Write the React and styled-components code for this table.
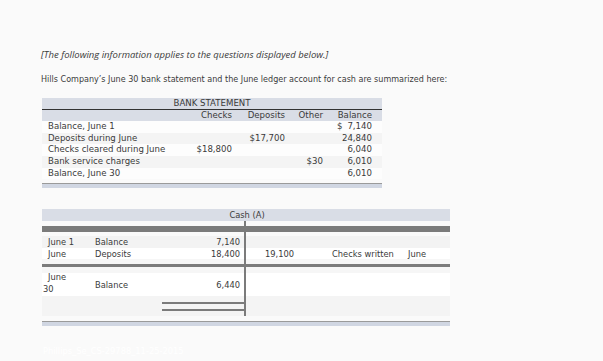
import React from "react";
import styled, { createGlobalStyle } from "styled-components";

const Global = createGlobalStyle`
  html, body { margin: 0; padding: 0; background: #fafafa; }
  body { font-family: "DejaVu Sans", "Open Sans", sans-serif; color: #3a3a3a; }
`;

const Page = styled.div`
  width: 603px;
  height: 361px;
  box-sizing: border-box;
  padding: 49px 0 0 41px;
  display: flex;
  flex-direction: column;
  align-items: flex-start;
  font-size: 8.3px;
`;

const Intro = styled.p`
  margin: 0;
  line-height: 12px;
  font-size: ${(p) => (p.$italic ? "9.5px" : "8.05px")};
  font-family: ${(p) => (p.$italic ? '"Open Sans", "DejaVu Sans", sans-serif' : "inherit")};
  font-style: ${(p) => (p.$italic ? "italic" : "normal")};
  margin-bottom: ${(p) => p.$mb || 0}px;
`;

const BankTable = styled.div`
  width: 340px;
  margin-left: 1px;
  display: flex;
  flex-direction: column;
  font-size: 8.6px;
`;

const TitleBand = styled.div`
  background: #d9dde6;
  height: 11px;
  line-height: 11px;
  text-align: center;
  border-bottom: 1px solid #333;
`;

const BankGrid = styled.div`
  display: grid;
  grid-template-columns: 132px 52px 53px 38px 49px;
  padding: 0 10px 0 6px;
  height: ${(p) => p.$h || 11.7}px;
  line-height: ${(p) => p.$h || 11.7}px;
  background: ${(p) => p.$bg || "transparent"};
`;

const Cell = styled.div`
  text-align: ${(p) => (p.$right ? "right" : "left")};
  white-space: nowrap;
`;

const BalCell = styled.div`
  display: flex;
  justify-content: ${(p) => (p.$dollar ? "space-between" : "flex-end")};
  padding-left: 14px;
  white-space: nowrap;
`;

const FooterBand = styled.div`
  height: 4px;
  margin-top: ${(p) => p.$mt || 0}px;
  border-top: 1px solid #9a9a9a;
  background: #d0d6e2;
`;

const TAccount = styled.div`
  width: 408px;
  margin-left: 1px;
  margin-top: 21px;
  display: flex;
  flex-direction: column;
`;

const TTitle = styled.div`
  background: #d9dde6;
  height: 12px;
  line-height: 12px;
  text-align: center;
  padding-left: 2px;
`;

const TRow = styled.div`
  display: grid;
  grid-template-columns: 204px 1fr;
  height: ${(p) => p.$h}px;
  background: ${(p) => p.$bg || "transparent"};
  border-bottom: ${(p) => (p.$rule ? `${p.$rule}px solid #7b7b7b` : "none")};
`;

const TBar = styled.div`
  height: 6px;
  background: #7b7b7b;
`;

const DebitSide = styled.div`
  display: grid;
  grid-template-columns: ${(p) => (p.$pl === 1 ? "52px" : "47px")} 60px 1fr;
  align-items: center;
  border-right: 2px solid #7b7b7b;
  padding-left: ${(p) => p.$pl ?? 6}px;
  padding-right: 4px;
`;

const CreditSide = styled.div`
  display: grid;
  grid-template-columns: 48px 38px 76px 40px;
  align-items: center;
`;

const Txt = styled.span`
  white-space: nowrap;
  text-align: ${(p) => (p.$right ? "right" : "left")};
`;

const DateWrap = styled.span`
  width: 30px;
  line-height: 11.5px;
  text-indent: 5px;
  white-space: normal;
  align-self: start;
  margin-top: -1px;
`;

const Rules = styled.div`
  grid-column: 1 / -1;
  justify-self: end;
  width: 82px;
  margin-right: -4px;
  height: 5px;
  border-top: 2px solid #7b7b7b;
  border-bottom: 2px solid #7b7b7b;
`;

const Watermark = styled.div`
  margin-top: 20px;
  margin-left: 2px;
  color: #ffffff;
`;

const bankRows = [
  { label: "Balance, June 1", checks: "", deposits: "", other: "", bal: "7,140", dollar: true },
  { label: "Deposits during June", checks: "", deposits: "$17,700", other: "", bal: "24,840" },
  { label: "Checks cleared during June", checks: "$18,800", deposits: "", other: "", bal: "6,040" },
  { label: "Bank service charges", checks: "", deposits: "", other: "$30", bal: "6,010" },
  { label: "Balance, June 30", checks: "", deposits: "", other: "", bal: "6,010" },
];

export default function App() {
  return (
    <>
      <Global />
      <Page>
        <Intro $italic $mb={13}>
          [The following information applies to the questions displayed below.]
        </Intro>
        <Intro $mb={12}>
          Hills Company’s June 30 bank statement and the June ledger account for cash are summarized here:
        </Intro>

        <BankTable>
          <TitleBand>BANK STATEMENT</TitleBand>
          <BankGrid $bg="#d9dde6" $h={11}>
            <Cell />
            <Cell $right>Checks</Cell>
            <Cell $right>Deposits</Cell>
            <Cell $right>Other</Cell>
            <BalCell>Balance</BalCell>
          </BankGrid>
          {bankRows.map((r, i) => (
            <BankGrid key={r.label} $bg={i % 2 ? "#f4f4f4" : "#fdfdfd"}>
              <Cell>{r.label}</Cell>
              <Cell $right>{r.checks}</Cell>
              <Cell $right>{r.deposits}</Cell>
              <Cell $right>{r.other}</Cell>
              <BalCell $dollar={r.dollar}>
                {r.dollar && <span>$</span>}
                <span>{r.bal}</span>
              </BalCell>
            </BankGrid>
          ))}
          <FooterBand $mt={4} />
        </BankTable>

        <TAccount>
          <TTitle>Cash (A)</TTitle>
          <TRow $h={5}>
            <DebitSide />
            <div />
          </TRow>
          <TBar />
          <TRow $h={4}>
            <DebitSide />
            <div />
          </TRow>
          <TRow $h={12} $bg="#f3f3f3">
            <DebitSide>
              <Txt>June 1</Txt>
              <Txt>Balance</Txt>
              <Txt $right>7,140</Txt>
            </DebitSide>
            <CreditSide />
          </TRow>
          <TRow $h={11} $bg="#ffffff">
            <DebitSide>
              <Txt>June</Txt>
              <Txt>Deposits</Txt>
              <Txt $right>18,400</Txt>
            </DebitSide>
            <CreditSide>
              <Txt $right>19,100</Txt>
              <span />
              <Txt>Checks written</Txt>
              <Txt>June</Txt>
            </CreditSide>
          </TRow>
          <TRow $h={5} $rule={3} $bg="#f6f6f6">
            <DebitSide />
            <div />
          </TRow>
          <TRow $h={6} $bg="#f6f6f6">
            <DebitSide />
            <div />
          </TRow>
          <TRow $h={23} $bg="#ffffff">
            <DebitSide $pl={1}>
              <DateWrap>June 30</DateWrap>
              <Txt>Balance</Txt>
              <Txt $right>6,440</Txt>
            </DebitSide>
            <div />
          </TRow>
          <TRow $h={20} $bg="#f4f4f4">
            <DebitSide>
              <Rules />
            </DebitSide>
            <div />
          </TRow>
          <FooterBand $mt={5} />
        </TAccount>

        <Watermark>Phillips_Se_CS-29788_11-25-2015</Watermark>
      </Page>
    </>
  );
}
